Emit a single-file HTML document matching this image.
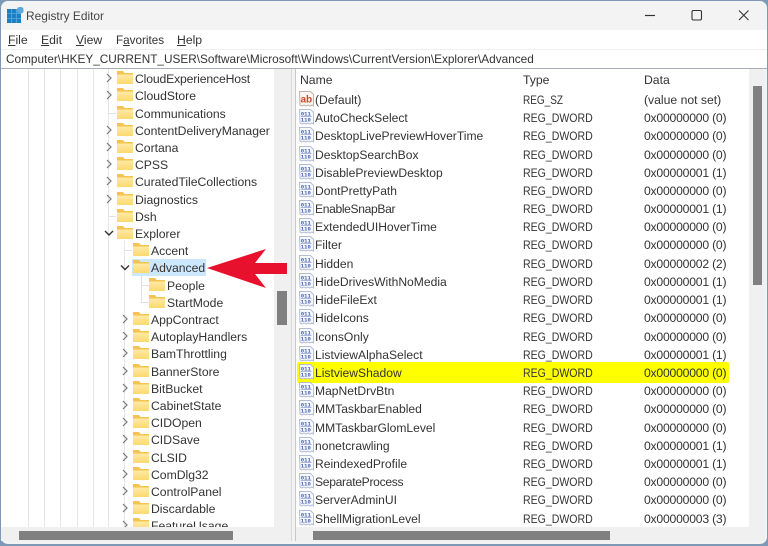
<!DOCTYPE html>
<html><head><meta charset="utf-8"><style>
html,body{margin:0;padding:0;background:#fff}
#w{position:relative;width:768px;height:546px;overflow:hidden;background:#7d99b5;font-family:"Liberation Sans",sans-serif;color:#333;font-size:12.2px;filter:blur(.3px)}
#w div{position:absolute;white-space:nowrap}
#in{left:1px;top:1px;width:766px;height:543px;background:#f3f3f3;border-radius:7px;overflow:hidden}
.m{top:33px;font-size:12.2px;line-height:15px}
.t{line-height:16px;height:16px;margin-top:1px}
.a{left:135px}.b{left:151px}.c{left:167px}
.r,.y,.d{line-height:16px;height:16px;margin-top:1px}
.r{left:315px;font-size:12.1px}.y{left:523px;transform:scaleX(.865);transform-origin:0 50%}.d{left:644px;letter-spacing:-.22px}
.g{background:#808080}
svg{position:absolute;overflow:visible}
</style></head><body><div id="w"><div id="in"></div>
<svg width="0" height="0" style="left:0;top:0"><defs>
<linearGradient id="fg" x1="0" y1="0" x2="0" y2="1"><stop offset="0" stop-color="#ffeaa6"/><stop offset="1" stop-color="#fbd970"/></linearGradient>
<g id="f"><path d="M0 1h6l1.500 2H16V13.500H0z" fill="#f3c54e"/><path d="M0 4.500h16v9.500H0z" fill="url(#fg)"/></g>
<g id="i"><path d="M.5.500h11l3 3V15l-1.500-1-2 1-2-1-2 1-2-1-2 1-2-1z" fill="#f9fafd" stroke="#b4bdd6"/><text x="1.800" y="6.400" font-family="Liberation Mono" font-size="5.600" font-weight="bold" fill="#3a5bb8">011</text><path d="M2 7.600h10.500" stroke="#8797cc" stroke-width=".7"/><text x="1.800" y="12.600" font-family="Liberation Mono" font-size="5.600" font-weight="bold" fill="#3a5bb8">110</text></g>
<path id="cr" d="M0 0l4 4-4 4" fill="none" stroke="#777" stroke-width="1.200"/>
</defs></svg>

<!-- title -->
<svg style="left:7px;top:7px" width="17" height="17"><rect x="0" y="2" width="14" height="14" fill="#1a7fc4"/><path d="M4.700 2v14M9.300 2v14M0 6.700h14M0 11.300h14" stroke="#5fb4e4" stroke-width=".7"/><rect x="10" y="0" width="6.500" height="6.500" rx="2.500" fill="#5aa9d8"/></svg>
<div style="left:26px;top:8px;font-size:11.9px;line-height:16px;color:#444">Registry Editor</div>
<svg style="left:640px;top:5px" width="120" height="20"><path d="M5 10.500h10" stroke="#333" stroke-width="1.200"/><rect x="52" y="5.500" width="9.500" height="9.500" rx="1.500" fill="none" stroke="#333" stroke-width="1.100"/><path d="M99 5.500l9.500 9.500M108.500 5.500L99 15" stroke="#333" stroke-width="1.100"/></svg>

<!-- menu -->
<div style="left:1px;top:30px;width:766px;height:20px;background:#fff"></div>
<div class="m" style="left:8px"><u>F</u>ile</div>
<div class="m" style="left:41px"><u>E</u>dit</div>
<div class="m" style="left:76px"><u>V</u>iew</div>
<div class="m" style="left:116px;font-size:11.7px">F<u>a</u>vorites</div>
<div class="m" style="left:177px"><u>H</u>elp</div>
<!-- address -->
<div style="left:1px;top:49px;width:766px;height:19px;background:#fff;border-top:1px solid #f0f0f0"></div>
<div style="left:6px;top:52px;font-size:11.8px;line-height:15px;color:#333">Computer\HKEY_CURRENT_USER\Software\Microsoft\Windows\CurrentVersion\Explorer\Advanced</div>
<div style="left:1px;top:68px;width:766px;height:1px;background:#a8aeb4"></div>

<!-- tree pane -->
<div style="left:1px;top:69px;width:290px;height:471px;background:#f0f0f0"></div>
<div style="left:1px;top:69px;width:273px;height:458px;background:#fff;overflow:hidden" id="tp"></div>
<div style="left:28px;top:69px;width:1px;height:458px;background:#e6e6e6"></div>
<div style="left:44px;top:69px;width:1px;height:458px;background:#e6e6e6"></div>
<div style="left:60px;top:69px;width:1px;height:458px;background:#e6e6e6"></div>
<div style="left:77px;top:69px;width:1px;height:458px;background:#e6e6e6"></div>
<div style="left:93px;top:69px;width:1px;height:458px;background:#e6e6e6"></div>
<div style="left:108px;top:69px;width:1px;height:458px;background:#e6e6e6"></div>
<div style="left:124px;top:241px;width:1px;height:286px;background:#e6e6e6"></div>
<div style="left:108px;top:113px;width:8px;height:1px;background:#e0e0e0"></div>
<div style="left:108px;top:216px;width:8px;height:1px;background:#e0e0e0"></div>
<div style="left:124px;top:250px;width:8px;height:1px;background:#e0e0e0"></div>
<div style="left:141px;top:276px;width:1px;height:27px;background:#e0e0e0"></div>
<div style="left:141px;top:285px;width:8px;height:1px;background:#e0e0e0"></div>
<div style="left:141px;top:302px;width:8px;height:1px;background:#e0e0e0"></div>
<div style="left:132px;top:259px;width:74px;height:17px;background:#cce8ff"></div>

<svg style="left:0;top:69px" width="274" height="458">
<g transform="translate(0,-69)">
<use href="#cr" x="107" y="74"/><use href="#cr" x="107" y="91"/><use href="#cr" x="107" y="126"/><use href="#cr" x="107" y="143"/><use href="#cr" x="107" y="160"/><use href="#cr" x="107" y="177"/><use href="#cr" x="107" y="195"/>
<path d="M105 231l4 4 4-4" fill="none" stroke="#333" stroke-width="1.400"/>
<path d="M121 265.500l4 4 4-4" fill="none" stroke="#333" stroke-width="1.400"/>
<use href="#cr" x="123" y="315"/><use href="#cr" x="123" y="332"/><use href="#cr" x="123" y="349"/><use href="#cr" x="123" y="367"/><use href="#cr" x="123" y="384"/><use href="#cr" x="123" y="401"/><use href="#cr" x="123" y="418"/><use href="#cr" x="123" y="435"/><use href="#cr" x="123" y="453"/><use href="#cr" x="123" y="470"/><use href="#cr" x="123" y="487"/><use href="#cr" x="123" y="504"/><use href="#cr" x="123" y="521"/>
<use href="#f" x="117" y="70"/><use href="#f" x="117" y="87"/><use href="#f" x="117" y="105"/><use href="#f" x="117" y="122"/><use href="#f" x="117" y="139"/><use href="#f" x="117" y="156"/><use href="#f" x="117" y="173"/><use href="#f" x="117" y="191"/><use href="#f" x="117" y="208"/><use href="#f" x="117" y="225"/>
<use href="#f" x="133" y="242"/><use href="#f" x="133" y="259"/>
<use href="#f" x="149" y="277"/><use href="#f" x="149" y="294"/>
<use href="#f" x="133" y="311"/><use href="#f" x="133" y="328"/><use href="#f" x="133" y="345"/><use href="#f" x="133" y="363"/><use href="#f" x="133" y="380"/><use href="#f" x="133" y="397"/><use href="#f" x="133" y="414"/><use href="#f" x="133" y="431"/><use href="#f" x="133" y="449"/><use href="#f" x="133" y="466"/><use href="#f" x="133" y="483"/><use href="#f" x="133" y="500"/><use href="#f" x="133" y="517"/>
</g></svg>

<div class="t a" style="top:70px;letter-spacing:-.15px">CloudExperienceHost</div>
<div class="t a" style="top:87px">CloudStore</div>
<div class="t a" style="top:105px">Communications</div>
<div class="t a" style="top:122px">ContentDeliveryManager</div>
<div class="t a" style="top:139px">Cortana</div>
<div class="t a" style="top:156px">CPSS</div>
<div class="t a" style="top:173px">CuratedTileCollections</div>
<div class="t a" style="top:191px">Diagnostics</div>
<div class="t a" style="top:208px">Dsh</div>
<div class="t a" style="top:225px">Explorer</div>
<div class="t b" style="top:242px">Accent</div>
<div class="t b" style="top:259px">Advanced</div>
<div class="t c" style="top:277px">People</div>
<div class="t c" style="top:294px">StartMode</div>
<div class="t b" style="top:311px">AppContract</div>
<div class="t b" style="top:328px">AutoplayHandlers</div>
<div class="t b" style="top:345px">BamThrottling</div>
<div class="t b" style="top:363px">BannerStore</div>
<div class="t b" style="top:380px">BitBucket</div>
<div class="t b" style="top:397px">CabinetState</div>
<div class="t b" style="top:414px">CIDOpen</div>
<div class="t b" style="top:431px">CIDSave</div>
<div class="t b" style="top:449px">CLSID</div>
<div class="t b" style="top:466px">ComDlg32</div>
<div class="t b" style="top:483px">ControlPanel</div>
<div class="t b" style="top:500px">Discardable</div>
<div class="t b" style="top:517px;height:9px;overflow:hidden">FeatureUsage</div>
<div style="left:1px;top:527px;width:290px;height:14px;background:#f0f0f0"></div>
<div class="g" style="left:277px;top:291px;width:10px;height:34px"></div>
<div class="g" style="left:19px;top:531px;width:214px;height:9px"></div>

<!-- splitter + list -->
<div style="left:291px;top:69px;width:5px;height:472px;background:#f3f3f3"></div>
<div style="left:295px;top:69px;width:1px;height:472px;background:#c8c8c8"></div>
<div style="left:291px;top:69px;width:1px;height:472px;background:#d8d8d8"></div>
<div style="left:296px;top:69px;width:453px;height:458px;background:#fff"></div>
<div style="left:749px;top:69px;width:16px;height:458px;background:#f0f0f0"></div>
<div class="g" style="left:753px;top:86px;width:9px;height:199px"></div>
<div style="left:296px;top:527px;width:469px;height:14px;background:#f0f0f0"></div>
<div class="g" style="left:313px;top:531px;width:297px;height:9px"></div>
<div style="left:297px;top:362px;width:432px;height:21px;background:#ffff00;border-radius:2px"></div>

<div style="left:300px;top:72px;line-height:16px">Name</div>
<div style="left:523px;top:72px;line-height:16px">Type</div>
<div style="left:644px;top:72px;line-height:16px">Data</div>

<svg style="left:0;top:0" width="768" height="546">
<g transform="translate(299,91)"><path d="M.5.500h11l3 3V15l-1.500-1-2 1-2-1-2 1-2-1-2 1-2-1z" fill="#fbf6f2" stroke="#c0b0aa"/></g>
<text x="300.500" y="102.500" font-family="Liberation Sans" font-size="10" font-weight="bold" fill="#c8482c">ab</text>
<use href="#i" x="299" y="109"/><use href="#i" x="299" y="127"/><use href="#i" x="299" y="146"/><use href="#i" x="299" y="164"/><use href="#i" x="299" y="182"/><use href="#i" x="299" y="200"/><use href="#i" x="299" y="218"/><use href="#i" x="299" y="236"/><use href="#i" x="299" y="255"/><use href="#i" x="299" y="273"/><use href="#i" x="299" y="291"/><use href="#i" x="299" y="309"/><use href="#i" x="299" y="328"/><use href="#i" x="299" y="346"/><use href="#i" x="299" y="364"/><use href="#i" x="299" y="382"/><use href="#i" x="299" y="400"/><use href="#i" x="299" y="419"/><use href="#i" x="299" y="437"/><use href="#i" x="299" y="455"/><use href="#i" x="299" y="473"/><use href="#i" x="299" y="491"/><use href="#i" x="299" y="510"/>
</svg>

<div class="r" style="top:91px">(Default)</div><div class="y" style="top:91px;transform:scaleX(.82)">REG_SZ</div><div class="d" style="top:91px;letter-spacing:0">(value not set)</div>
<div class="r" style="top:109px">AutoCheckSelect</div><div class="y" style="top:109px">REG_DWORD</div><div class="d" style="top:109px">0x00000000 (0)</div>
<div class="r" style="top:127px">DesktopLivePreviewHoverTime</div><div class="y" style="top:127px">REG_DWORD</div><div class="d" style="top:127px">0x00000000 (0)</div>
<div class="r" style="top:146px">DesktopSearchBox</div><div class="y" style="top:146px">REG_DWORD</div><div class="d" style="top:146px">0x00000000 (0)</div>
<div class="r" style="top:164px">DisablePreviewDesktop</div><div class="y" style="top:164px">REG_DWORD</div><div class="d" style="top:164px">0x00000001 (1)</div>
<div class="r" style="top:182px">DontPrettyPath</div><div class="y" style="top:182px">REG_DWORD</div><div class="d" style="top:182px">0x00000000 (0)</div>
<div class="r" style="top:200px;letter-spacing:-.35px">EnableSnapBar</div><div class="y" style="top:200px">REG_DWORD</div><div class="d" style="top:200px">0x00000001 (1)</div>
<div class="r" style="top:218px">ExtendedUIHoverTime</div><div class="y" style="top:218px">REG_DWORD</div><div class="d" style="top:218px">0x00000000 (0)</div>
<div class="r" style="top:236px">Filter</div><div class="y" style="top:236px">REG_DWORD</div><div class="d" style="top:236px">0x00000000 (0)</div>
<div class="r" style="top:255px">Hidden</div><div class="y" style="top:255px">REG_DWORD</div><div class="d" style="top:255px">0x00000002 (2)</div>
<div class="r" style="top:273px">HideDrivesWithNoMedia</div><div class="y" style="top:273px">REG_DWORD</div><div class="d" style="top:273px">0x00000001 (1)</div>
<div class="r" style="top:291px">HideFileExt</div><div class="y" style="top:291px">REG_DWORD</div><div class="d" style="top:291px">0x00000001 (1)</div>
<div class="r" style="top:309px">HideIcons</div><div class="y" style="top:309px">REG_DWORD</div><div class="d" style="top:309px">0x00000000 (0)</div>
<div class="r" style="top:328px">IconsOnly</div><div class="y" style="top:328px">REG_DWORD</div><div class="d" style="top:328px">0x00000000 (0)</div>
<div class="r" style="top:346px">ListviewAlphaSelect</div><div class="y" style="top:346px">REG_DWORD</div><div class="d" style="top:346px">0x00000001 (1)</div>
<div class="r" style="top:364px">ListviewShadow</div><div class="y" style="top:364px">REG_DWORD</div><div class="d" style="top:364px">0x00000000 (0)</div>
<div class="r" style="top:382px">MapNetDrvBtn</div><div class="y" style="top:382px">REG_DWORD</div><div class="d" style="top:382px">0x00000000 (0)</div>
<div class="r" style="top:400px">MMTaskbarEnabled</div><div class="y" style="top:400px">REG_DWORD</div><div class="d" style="top:400px">0x00000000 (0)</div>
<div class="r" style="top:419px">MMTaskbarGlomLevel</div><div class="y" style="top:419px">REG_DWORD</div><div class="d" style="top:419px">0x00000000 (0)</div>
<div class="r" style="top:437px">nonetcrawling</div><div class="y" style="top:437px">REG_DWORD</div><div class="d" style="top:437px">0x00000001 (1)</div>
<div class="r" style="top:455px">ReindexedProfile</div><div class="y" style="top:455px">REG_DWORD</div><div class="d" style="top:455px">0x00000001 (1)</div>
<div class="r" style="top:473px;letter-spacing:-.3px">SeparateProcess</div><div class="y" style="top:473px">REG_DWORD</div><div class="d" style="top:473px">0x00000000 (0)</div>
<div class="r" style="top:491px">ServerAdminUI</div><div class="y" style="top:491px">REG_DWORD</div><div class="d" style="top:491px">0x00000000 (0)</div>
<div class="r" style="top:510px">ShellMigrationLevel</div><div class="y" style="top:510px">REG_DWORD</div><div class="d" style="top:510px">0x00000003 (3)</div>

<!-- arrow -->
<svg style="left:0;top:0" width="768" height="546"><path d="M207 268L266 249L255 263H287V274H255L266 288Z" fill="#e8112d"/></svg>
</div></body></html>
